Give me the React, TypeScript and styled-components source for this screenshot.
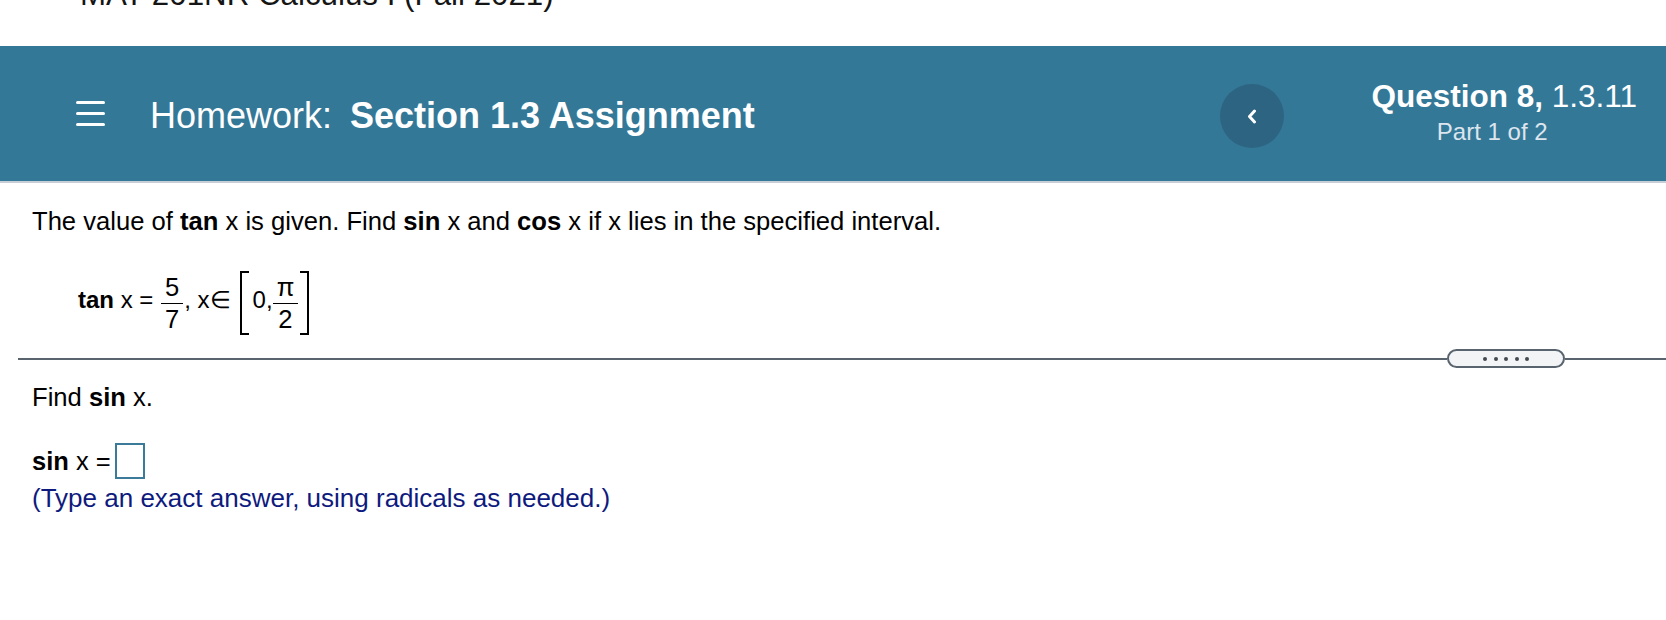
import React from 'react'
import styled, { createGlobalStyle } from 'styled-components';

const GlobalStyle = createGlobalStyle`
  html, body {
    margin: 0;
    padding: 0;
    background: #fff;
  }

  body {
    font-family: "Liberation Sans", Arial, Helvetica, sans-serif;
    color: #000;
  }
`

const CourseBar = styled.div`
  height: 46px;
  overflow: hidden;
  padding-left: 80px;
`

const CourseName = styled.div`
  margin-top: -21px;
  font-size: 31.3px;
  line-height: 31px;
  color: #151515;
  white-space: nowrap;
`

const Header = styled.header`
  height: 135px;
  display: flex;
  align-items: center;
  padding: 0 29px 0 76px;
  background: #347898;
  border-bottom: 2px solid #c8ced5;
  color: #fff;
`

const Hamburger = styled.button`
  width: 29px;
  height: 25px;
  padding: 0;
  border: 0;
  background: none;
  display: flex;
  flex-direction: column;
  justify-content: space-between;
  cursor: pointer;

  span {
    height: 3px;
    border-radius: 2px;
    background: #fff;
  }
`

const Title = styled.h1`
  margin: 4px 0 0 45px;
  font-size: 36px;
  font-weight: 400;
  white-space: nowrap;

  strong {
    margin-left: 18px;
    font-weight: 700;
  }
`

const Spacer = styled.div`
  flex: 1;
`

const NavButton = styled.button`
  width: 64px;
  height: 64px;
  margin-top: 5px;
  padding: 0;
  border: 0;
  border-radius: 50%;
  background: #2d6482;
  display: flex;
  align-items: center;
  justify-content: center;
  cursor: pointer;
`

const QuestionInfo = styled.div`
  margin-left: 87px;
  padding-top: 4px;
  display: flex;
  flex-direction: column;
  align-items: center;
  white-space: nowrap;
`

const QuestionLine = styled.div`
  font-size: 31.5px;
  line-height: 33px;

  strong {
    font-weight: 700;
  }
`

const PartLine = styled.div`
  padding-right: 24px;
  font-size: 24px;
  line-height: 38px;
  color: #dde5ee;
`

const Section = styled.section<{ $indent: number }>`
  padding-left: ${p => p.$indent}px;
`

const Text = styled.p<{ $top?: number; $color?: string; $size?: number }>`
  margin: ${p => p.$top ?? 0}px 0 0;
  font-size: ${p => p.$size ?? 25.6}px;
  line-height: 30px;
  color: ${p => p.$color ?? '#000'};
  white-space: nowrap;

  b {
    font-weight: 700;
  }
`

const MathRow = styled.div`
  height: 64px;
  margin: 35px 0 0 46px;
  display: flex;
  align-items: center;
  font-size: 24px;
  white-space: pre;
`

const MathText = styled.span`
  line-height: 24px;
  padding-bottom: 6px;

  b {
    font-weight: 700;
  }
`

const Fraction = styled.span<{ $tight?: boolean }>`
  display: inline-flex;
  flex-direction: column;
  align-items: center;
  margin: 0 1px 0 ${p => (p.$tight ? 0 : 1)}px;
  padding: 0 4px;
  font-size: 25.6px;
  line-height: 24px;

  > span:first-child {
    padding-bottom: 4px;
  }

  > span:last-child {
    padding-top: 3px;
  }
`

const Bar = styled.i`
  align-self: stretch;
  height: 1.5px;
  margin: 0 -4px;
  background: #000;
`

const Bracket = styled.span<{ $side: 'left' | 'right' }>`
  width: 7px;
  align-self: stretch;
  border: 2px solid #000;
  ${p => (p.$side === 'left' ? 'border-right: none; margin: 0 4px 0 9px;' : 'border-left: none; margin-left: 1px;')}
`

const DividerRow = styled.div`
  height: 19px;
  margin: 14px 0 0 18px;
  display: flex;
  align-items: center;
`

const Line = styled.div<{ $width?: number }>`
  height: 2px;
  background: #59646f;
  ${p => (p.$width ? `width: ${p.$width}px;` : 'flex: 1;')}
`

const MorePill = styled.button`
  width: 118px;
  height: 19px;
  padding: 0;
  box-sizing: border-box;
  border: 2px solid #59646f;
  border-radius: 10px;
  background: #f2f4f6;
  display: flex;
  align-items: center;
  justify-content: center;
  gap: 6.5px;

  span {
    width: 4px;
    height: 4px;
    border-radius: 50%;
    background: #454a51;
  }
`

const AnswerRow = styled.div`
  height: 36px;
  margin-top: 31px;
  display: flex;
  align-items: center;
  font-size: 25.5px;
  line-height: 30px;

  b {
    font-weight: 700;
  }
`

const AnswerBox = styled.span`
  width: 30px;
  height: 36px;
  margin-left: 4px;
  box-sizing: border-box;
  border: 2px solid #3b7b99;
  background: #fff;
`

function Frac({ top, bottom, tight }: { top: string; bottom: string; tight?: boolean }) {
  return (
    <Fraction $tight={tight}>
      <span>{top}</span>
      <Bar />
      <span>{bottom}</span>
    </Fraction>
  )
}

export default function App() {
  return (
    <>
      <GlobalStyle />
      <CourseBar>
        <CourseName>MAT 201NR Calculus I (Fall 2021)</CourseName>
      </CourseBar>

      <Header>
        <Hamburger aria-label="menu">
          <span />
          <span />
          <span />
        </Hamburger>
        <Title>
          Homework:<strong>Section 1.3 Assignment</strong>
        </Title>
        <Spacer />
        <NavButton aria-label="previous question">
          <svg width="10" height="15" viewBox="0 0 10 15">
            <polyline points="7.5,2 2.5,7.5 7.5,13" fill="none" stroke="#fff" strokeWidth="3" strokeLinecap="round" strokeLinejoin="round" />
          </svg>
        </NavButton>
        <QuestionInfo>
          <QuestionLine><strong>Question 8,</strong> 1.3.11</QuestionLine>
          <PartLine>Part 1 of 2</PartLine>
        </QuestionInfo>
      </Header>

      <main>
        <Section $indent={32}>
          <Text $top={23}>
            The value of <b>tan</b> x is given. Find <b>sin</b> x and <b>cos</b> x if x lies in the specified interval.
          </Text>
          <MathRow>
            <MathText><b>tan</b> x = </MathText>
            <Frac top="5" bottom="7" />
            <MathText>, x∈</MathText>
            <Bracket $side="left" />
            <MathText>0,</MathText>
            <Frac top="π" bottom="2" tight />
            <Bracket $side="right" />
          </MathRow>
        </Section>

        <DividerRow>
          <Line />
          <MorePill aria-label="more">
            <span /><span /><span /><span /><span />
          </MorePill>
          <Line $width={101} />
        </DividerRow>

        <Section $indent={32}>
          <Text $top={14}>Find <b>sin</b> x.</Text>
          <AnswerRow>
            <span><b>sin</b> x =</span>
            <AnswerBox />
          </AnswerRow>
          <Text $top={4} $size={26} $color="#0e1a7e">(Type an exact answer, using radicals as needed.)</Text>
        </Section>
      </main>
    </>
  )
}
